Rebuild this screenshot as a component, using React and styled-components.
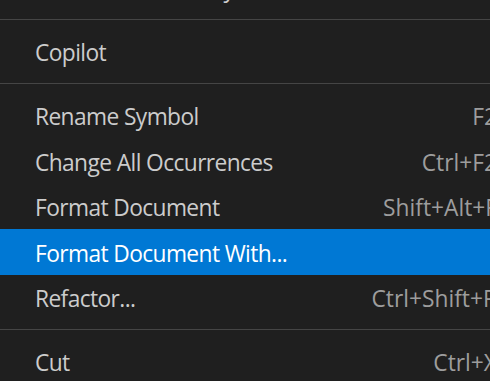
import React from 'react';
import styled, { createGlobalStyle } from 'styled-components';

const GlobalStyle = createGlobalStyle`
  html, body {
    margin: 0;
    padding: 0;
    background: #1f1f1f;
    overflow: hidden;
  }
`;

const Menu = styled.div`
  width: 540px;
  margin-top: -35.25px;
  background: #1f1f1f;
  font-family: 'Open Sans', 'Noto Sans', sans-serif;
  font-size: 22.75px;
  color: #cccccc;
`;

const Item = styled.div`
  display: flex;
  align-items: center;
  height: 45.5px;
  padding: 2px 43px 0 35px;
  box-sizing: border-box;
  background: ${(p) => (p.$active ? '#0078d4' : 'transparent')};
  color: ${(p) => (p.$active ? '#ffffff' : '#cccccc')};
  white-space: nowrap;
`;

const Label = styled.span`
  flex: 1;
  letter-spacing: -0.6px;
`;

const Keys = styled.span`
  color: ${(p) => (p.$active ? '#ffffff' : '#9d9d9d')};
`;

const Separator = styled.div`
  height: 1px;
  margin: 8.75px 0;
  background: #454545;
`;

const groups = [
  [{ label: 'Show Call Hierarchy' }],
  [{ label: 'Copilot' }],
  [
    { label: 'Rename Symbol', keys: 'F2' },
    { label: 'Change All Occurrences', keys: 'Ctrl+F2' },
    { label: 'Format Document', keys: 'Shift+Alt+F' },
    { label: 'Format Document With...', active: true },
    { label: 'Refactor...', keys: 'Ctrl+Shift+R' },
  ],
  [{ label: 'Cut', keys: 'Ctrl+X' }],
];

const App = () => (
  <>
    <GlobalStyle />
    <Menu>
      {groups.map((group, gi) => (
        <React.Fragment key={gi}>
          {gi > 0 && <Separator />}
          {group.map((item) => (
            <Item key={item.label} $active={item.active}>
              <Label>{item.label}</Label>
              {item.keys && <Keys $active={item.active}>{item.keys}</Keys>}
            </Item>
          ))}
        </React.Fragment>
      ))}
    </Menu>
  </>
);

export default App;
